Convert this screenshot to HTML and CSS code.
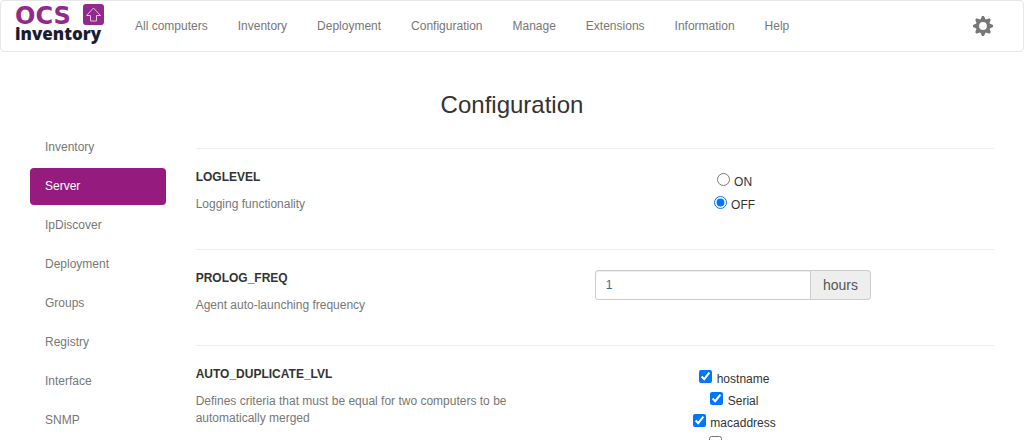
FILE: index.html
```html
<!DOCTYPE html>
<html lang="en">
<head>
    <meta charset="UTF-8">
    <meta name="viewport" content="width=device-width, initial-scale=1.0">
    <title>OCS Inventory</title>
    <link rel="stylesheet" href="styles.css">
</head>
<body>

<nav class="navbar">
    <a class="brand" href="#" aria-label="OCS inventory">
        <svg width="90" height="44" viewBox="0 0 90 44">
            <text class="brand-top" x="0" y="20">OCS</text>
            <rect x="68" y="0" width="21" height="21" rx="3" fill="#92298d"/>
            <path d="M78.500 4L85.500 11.500H81.500V17H75.500V11.500H71.500Z" fill="none" stroke="#e3bfe1" stroke-width="1"/>
            <text class="brand-bottom" x="0" y="36">inventory</text>
        </svg>
    </a>
    <ul class="menu">
        <li><a href="#">All computers</a></li>
        <li><a href="#">Inventory</a></li>
        <li><a href="#">Deployment</a></li>
        <li><a href="#">Configuration</a></li>
        <li><a href="#">Manage</a></li>
        <li><a href="#">Extensions</a></li>
        <li><a href="#">Information</a></li>
        <li><a href="#">Help</a></li>
    </ul>
    <button type="button" class="cog" aria-label="Settings">
        <svg width="20" height="20" viewBox="0 0 20 20">
            <g fill="#777">
                <path d="M9 0h2l2 4.500H7zM7 15.500h6L11 20H9z"/>
                <path d="M9 0h2l2 4.500H7zM7 15.500h6L11 20H9z" transform="rotate(45 10 10)"/>
                <path d="M9 0h2l2 4.500H7zM7 15.500h6L11 20H9z" transform="rotate(90 10 10)"/>
                <path d="M9 0h2l2 4.500H7zM7 15.500h6L11 20H9z" transform="rotate(135 10 10)"/>
            </g>
            <circle cx="10" cy="10" r="5.500" fill="none" stroke="#777" stroke-width="3.200"/>
        </svg>
    </button>
</nav>

<main class="container">
    <h3>Configuration</h3>
    <div class="row">
        <ul class="pills">
            <li><a href="#">Inventory</a></li>
            <li><a href="#" class="active">Server</a></li>
            <li><a href="#">IpDiscover</a></li>
            <li><a href="#">Deployment</a></li>
            <li><a href="#">Groups</a></li>
            <li><a href="#">Registry</a></li>
            <li><a href="#">Interface</a></li>
            <li><a href="#">SNMP</a></li>
        </ul>

        <form class="settings">
            <div class="setting">
                <div class="info">
                    <h4>LOGLEVEL</h4>
                    <p>Logging functionality</p>
                </div>
                <div class="control radios">
                    <label><input type="radio" name="loglevel" value="1"> ON</label>
                    <label><input type="radio" name="loglevel" value="0" checked> OFF</label>
                </div>
            </div>

            <div class="setting">
                <div class="info">
                    <h4><label for="prolog">PROLOG_FREQ</label></h4>
                    <p>Agent auto-launching frequency</p>
                </div>
                <div class="control input-group">
                    <input type="text" id="prolog" name="prolog" value="1">
                    <span class="addon">hours</span>
                </div>
            </div>

            <div class="setting">
                <div class="info">
                    <h4>AUTO_DUPLICATE_LVL</h4>
                    <p>Defines criteria that must be equal for two computers to be automatically merged</p>
                </div>
                <div class="control checks">
                    <label><input type="checkbox" name="hostname" checked> hostname</label>
                    <label><input type="checkbox" name="serial" checked> Serial</label>
                    <label><input type="checkbox" name="macaddress" checked> macaddress</label>
                    <label><input type="checkbox" name="model"> Model</label>
                </div>
            </div>
        </form>
    </div>
</main>

</body>
</html>
```
FILE: styles.css
```css
* {
    box-sizing: border-box;
}

body {
    margin: 0;
    font-family: "Liberation Sans", Arial, sans-serif;
    font-size: 12px;
    line-height: 17px;
    color: #333;
    background-color: #fff;
}

a {
    color: #777;
    text-decoration: none;
}

ul {
    list-style: none;
    margin: 0;
    padding: 0;
}

.navbar {
    display: flex;
    align-items: center;
    height: 52px;
    padding: 0 30px 0 14px;
    border: 1px solid #e7e7e7;
    border-radius: 4px;
}

.brand svg {
    display: block;
}

.brand-top {
    font-family: "DejaVu Sans", sans-serif;
    font-size: 24px;
    font-weight: bold;
    fill: #92298d;
}

.brand-bottom {
    font-family: "Open Sans", sans-serif;
    font-size: 17px;
    font-weight: 800;
    fill: #1a1c30;
}

.menu {
    display: flex;
    flex: 1;
    margin-left: 15px;
}

.menu a {
    display: block;
    padding: 15px;
}

.cog {
    padding: 0;
    border: none;
    background: none;
}

.cog svg {
    display: block;
}

.container {
    padding: 0 15px;
}

h3 {
    margin: 40px 0 16px;
    font-size: 24px;
    font-weight: normal;
    line-height: 26px;
    text-align: center;
}

.row {
    display: grid;
    grid-template-columns: 1fr 5fr;
}

.pills {
    display: flex;
    flex-direction: column;
    gap: 2px;
    padding: 0 15px;
    margin-top: -5px;
}

.pills a {
    display: block;
    padding: 10px 15px;
    border-radius: 4px;
}

.pills a.active {
    color: #fff;
    background-color: #961b7e;
}

.settings {
    padding: 0 15px;
    margin-top: 14px;
}

.setting {
    display: grid;
    grid-template-columns: 1fr 1fr;
    padding: 20px 0;
    border-top: 1px solid #eee;
}

.info {
    padding-right: 30px;
}

h4 {
    margin: 0 0 10px;
    font-size: 12px;
    font-weight: bold;
}

p {
    margin: 0 0 11px;
    color: #777;
}

.control {
    width: calc(66.67% + 10px);
}

.radios,
.checks {
    display: flex;
    flex-direction: column;
    align-items: center;
    padding-top: 2px;
}

.radios {
    line-height: 23px;
    margin-bottom: 12px;
}

.checks {
    line-height: 22px;
}

.control label {
    display: block;
}

.control label input {
    margin: 0 1px 0 3px;
}

.input-group {
    display: flex;
    height: 30px;
}

.input-group input {
    flex: 1;
    min-width: 0;
    padding: 5px 10px;
    border: 1px solid #ccc;
    border-radius: 3px 0 0 3px;
    font-family: inherit;
    font-size: 12px;
    color: #3a6c93;
    box-shadow: inset 0 1px 1px rgba(0, 0, 0, 0.075);
}

.addon {
    padding: 6px 12px;
    border: 1px solid #ccc;
    border-left: none;
    border-radius: 0 4px 4px 0;
    font-size: 14px;
    color: #555;
    background-color: #eee;
}
```
